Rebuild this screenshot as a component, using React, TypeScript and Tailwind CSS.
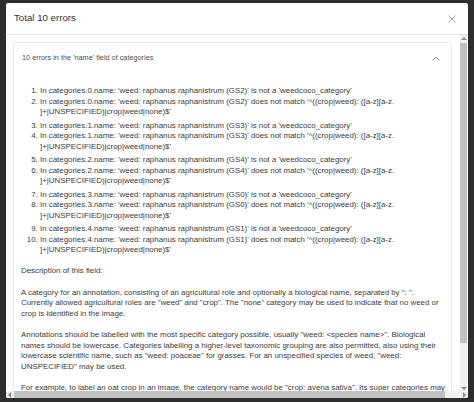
import React from "react";

const cats: [string, string][] = [
  ["0", "GS2"],
  ["1", "GS3"],
  ["2", "GS4"],
  ["3", "GS0"],
  ["4", "GS1"],
];

const p1 = [
  'A category for an annotation, consisting of an agricultural role and optionally a biological name, separated by ": ".',
  'Currently allowed agricultural roles are "weed" and "crop". The "none" category may be used to indicate that no weed or',
  "crop is identified in the image.",
];
const p2 = [
  'Annotations should be labelled with the most specific category possible, usually "weed: <species name>". Biological',
  "names should be lowercase. Categories labelling a higher-level taxonomic grouping are also permitted, also using their",
  'lowercase scientific name, such as "weed: poaceae" for grasses. For an unspecified species of weed, "weed:',
  'UNSPECIFIED" may be used.',
];
const p3 = [
  'For example, to label an oat crop in an image, the category name would be "crop: avena sativa". Its super categories may',
];

function Lines({ lines }: { lines: string[] }) {
  return (
    <p className="mb-[11px]">
      {lines.map((l, i) => (
        <span key={i} className="block whitespace-nowrap">
          {l}
        </span>
      ))}
    </p>
  );
}

function Tri({ dir }: { dir: "up" | "down" | "left" | "right" }) {
  const pts =
    dir === "up"
      ? "0,4 3,1 6,4"
      : dir === "down"
      ? "0,2 3,5 6,2"
      : dir === "left"
      ? "4,0 1,3 4,6"
      : "2,0 5,3 2,6";
  return (
    <svg width="6" height="6" viewBox="0 0 6 6">
      <polygon points={pts} fill="#8a8a8a" />
    </svg>
  );
}

export default function App() {
  return (
    <div className="w-[474px] h-[402px] bg-[#2e2e2e] pt-[3px] pl-[6px] pr-[6px] pb-[4px] overflow-hidden font-['Liberation_Sans',Arial,sans-serif]">
      <div className="h-full bg-white rounded-[2px] flex flex-col overflow-hidden">
        {/* header */}
        <div className="h-[32px] shrink-0 border-b border-[#e6e6e6] flex items-center justify-between pl-[8px] pr-[12px]">
          <span className="text-[9.7px] text-[#333]">Total 10 errors</span>
          <svg width="8" height="8" viewBox="0 0 8 8">
            <path d="M0.5 0.5 L7.5 7.5 M7.5 0.5 L0.5 7.5" stroke="#9a9a9a" strokeWidth="0.9" />
          </svg>
        </div>
        {/* body */}
        <div className="flex-1 min-h-0 flex">
          <div className="flex-1 min-w-0 overflow-hidden pt-[7px] pl-[7px] pr-[8px]">
            <div className="border border-[#ebebeb] rounded-[2px] shadow-[0_1px_2px_rgba(0,0,0,0.08)]">
              <div className="h-[31px] flex items-center justify-between pl-[8px] pr-[11px]">
                <span className="text-[7.3px] text-[#505050]">10 errors in the 'name' field of categories</span>
                <svg width="8" height="5" viewBox="0 0 8 5">
                  <polyline points="0.8,4.3 4,1.1 7.2,4.3" fill="none" stroke="#666" strokeWidth="0.9" />
                </svg>
              </div>
              <div className="pl-[7px] pr-[8px] pt-[12px] text-[7.9px] leading-[10.5px] text-[#3c3c3c]">
                <ol className="list-decimal pl-[19px] mb-[10.5px]">
                  {cats.map(([n, gs]) => (
                    <React.Fragment key={n}>
                      <li className="whitespace-nowrap">
                        In categories.{n}.name: 'weed: raphanus raphanistrum ({gs})' is not a 'weedcoco_category'
                      </li>
                      <li className="whitespace-nowrap mb-[3px]">
                        In categories.{n}.name: 'weed: raphanus raphanistrum ({gs})' does not match '^((crop|weed): ([a-z][a-z.
                        <br />
                        ]+|UNSPECIFIED)|crop|weed|none)$'
                      </li>
                    </React.Fragment>
                  ))}
                </ol>
                <p className="mb-[11px]">Description of this field:</p>
                <Lines lines={p1} />
                <Lines lines={p2} />
                <Lines lines={p3} />
              </div>
            </div>
          </div>
          {/* vertical scrollbar */}
          <div className="w-[7px] mr-[1px] shrink-0 bg-[#f0f0f0] flex flex-col">
            <div className="h-[7px] flex items-center justify-center">
              <Tri dir="up" />
            </div>
            <div className="mt-[1px] h-[300px] bg-[#c1c1c1]" />
            <div className="flex-1" />
            <div className="h-[7px] flex items-center justify-center">
              <Tri dir="down" />
            </div>
          </div>
        </div>
        {/* horizontal scrollbar */}
        <div className="h-[7px] shrink-0 bg-[#f0f0f0] flex items-center">
          <div className="w-[7px] flex items-center justify-center">
            <Tri dir="left" />
          </div>
          <div className="ml-[1px] w-[431px] h-full bg-[#c1c1c1]" />
          <div className="flex-1" />
          <div className="w-[7px] mr-[1px] flex items-center justify-center">
            <Tri dir="right" />
          </div>
        </div>
      </div>
    </div>
  );
}
